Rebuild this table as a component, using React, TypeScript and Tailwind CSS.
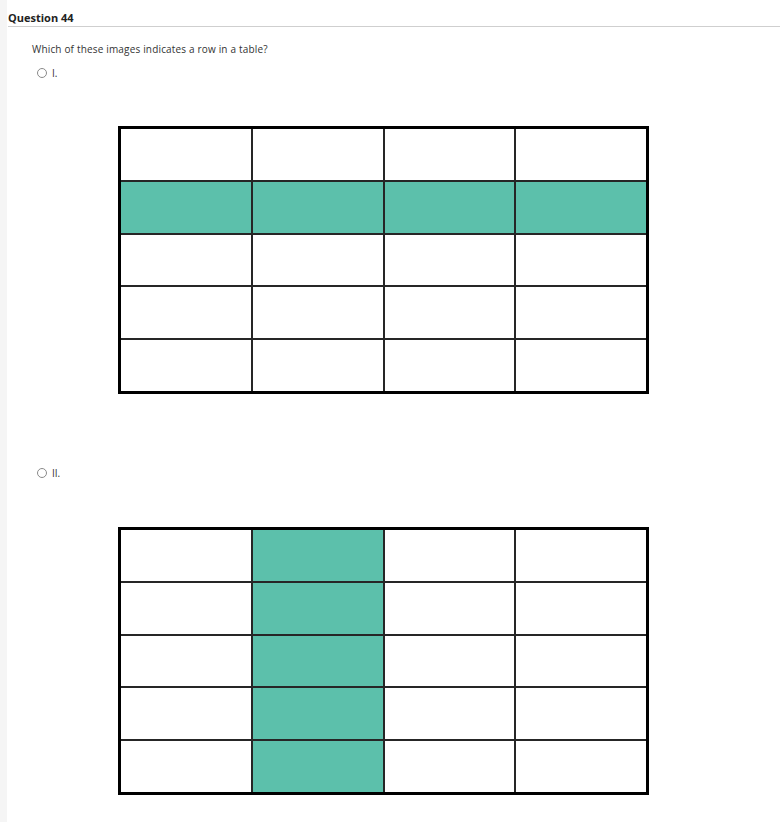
const TEAL = "bg-[#5cc0ab]";

function Grid({ highlight }: { highlight: (r: number, c: number) => boolean }) {
  const cells = [];
  for (let r = 0; r < 5; r++) {
    for (let c = 0; c < 4; c++) {
      cells.push(
        <div key={`${r}-${c}`} className={highlight(r, c) ? TEAL : "bg-white"} />
      );
    }
  }
  return (
    <div className="ml-[110px] w-[531px] h-[268px] border-[3px] border-black bg-[#262626] grid grid-cols-4 grid-rows-5 gap-[2px]">
      {cells}
    </div>
  );
}

function Option({ label }: { label: string }) {
  return (
    <div className="flex items-center gap-[5px] ml-[29px] h-[12px]">
      <span className="w-[10px] h-[10px] rounded-full border border-[#8a8a8a] bg-white" />
      <span className="text-[10px] text-[#333]">{label}</span>
    </div>
  );
}

export default function App() {
  return (
    <div className="flex min-h-[822px] bg-white" style={{ fontFamily: '"Open Sans", sans-serif' }}>
      <div className="w-[7px] bg-[#f5f5f5] shrink-0" />
      <div className="flex-1 pl-[1px]">
        <div className="pt-[11px] pb-[1px] border-b border-[#cfcfcf]">
          <h2 className="text-[11px] font-bold text-[#222] leading-[14px]">Question 44</h2>
        </div>
        <p className="mt-[16px] ml-[24px] text-[10px] tracking-[0.17px] text-[#333] leading-[12px]">
          Which of these images indicates a row in a table?
        </p>
        <div className="mt-[12px]">
          <Option label="I." />
        </div>
        <div className="mt-[47px]">
          <Grid highlight={(r) => r === 1} />
        </div>
        <div className="mt-[73px]">
          <Option label="II." />
        </div>
        <div className="mt-[48px]">
          <Grid highlight={(_, c) => c === 1} />
        </div>
      </div>
    </div>
  );
}
